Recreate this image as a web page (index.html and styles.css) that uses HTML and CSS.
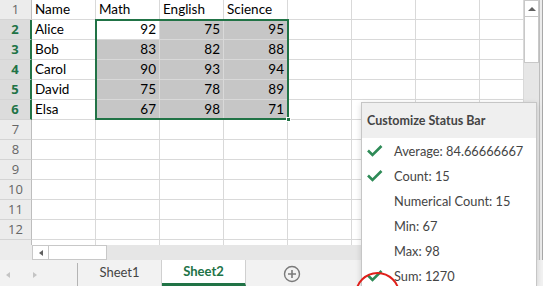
FILE: index.html
```html
<!DOCTYPE html>
<html lang="en">
<head>
    <meta charset="UTF-8">
    <title>Book1 - Excel</title>
    <link rel="stylesheet" href="styles.css">
</head>
<body>
    <div class="excel">
        <!-- Sheet area -->
        <div class="sheet-row">
            <div class="grid-area">
                <div class="grid">
                    <div class="rh">1</div><div class="c">Name</div><div class="c">Math</div><div class="c">English</div><div class="c">Science</div><div class="c"></div><div class="c"></div><div class="c"></div><div class="c"></div>
                    <div class="rh sel">2</div><div class="c">Alice</div><div class="c num active">92</div><div class="c num hl">75</div><div class="c num hl">95</div><div class="c"></div><div class="c"></div><div class="c"></div><div class="c"></div>
                    <div class="rh sel">3</div><div class="c">Bob</div><div class="c num hl">83</div><div class="c num hl">82</div><div class="c num hl">88</div><div class="c"></div><div class="c"></div><div class="c"></div><div class="c"></div>
                    <div class="rh sel">4</div><div class="c">Carol</div><div class="c num hl">90</div><div class="c num hl">93</div><div class="c num hl">94</div><div class="c"></div><div class="c"></div><div class="c"></div><div class="c"></div>
                    <div class="rh sel">5</div><div class="c">David</div><div class="c num hl">75</div><div class="c num hl">78</div><div class="c num hl">89</div><div class="c"></div><div class="c"></div><div class="c"></div><div class="c"></div>
                    <div class="rh sel">6</div><div class="c">Elsa</div><div class="c num hl">67</div><div class="c num hl">98</div><div class="c num hl">71</div><div class="c"></div><div class="c"></div><div class="c"></div><div class="c"></div>
                    <div class="rh">7</div><div class="c"></div><div class="c"></div><div class="c"></div><div class="c"></div><div class="c"></div><div class="c"></div><div class="c"></div><div class="c"></div>
                    <div class="rh">8</div><div class="c"></div><div class="c"></div><div class="c"></div><div class="c"></div><div class="c"></div><div class="c"></div><div class="c"></div><div class="c"></div>
                    <div class="rh">9</div><div class="c"></div><div class="c"></div><div class="c"></div><div class="c"></div><div class="c"></div><div class="c"></div><div class="c"></div><div class="c"></div>
                    <div class="rh">10</div><div class="c"></div><div class="c"></div><div class="c"></div><div class="c"></div><div class="c"></div><div class="c"></div><div class="c"></div><div class="c"></div>
                    <div class="rh">11</div><div class="c"></div><div class="c"></div><div class="c"></div><div class="c"></div><div class="c"></div><div class="c"></div><div class="c"></div><div class="c"></div>
                    <div class="rh">12</div><div class="c"></div><div class="c"></div><div class="c"></div><div class="c"></div><div class="c"></div><div class="c"></div><div class="c"></div><div class="c"></div>
                    <div class="rh"></div><div class="c"></div><div class="c"></div><div class="c"></div><div class="c"></div><div class="c"></div><div class="c"></div><div class="c"></div><div class="c"></div>
                </div>

                <!-- selection B2:D6 -->
                <div class="selection"><span class="handle"></span></div>

                <div class="hscroll">
                    <div class="hscroll-lead"></div>
                    <div class="sb-btn"><span class="arrow-left"></span></div>
                    <div class="hthumb"></div>
                    <div class="htrack"></div>
                </div>
            </div>

            <div class="vscroll">
                <div class="sb-btn up"><span class="arrow-up"></span></div>
                <div class="vthumb"></div>
                <div class="vtrack"></div>
            </div>
            <div class="edge"></div>
        </div>

        <!-- Sheet tabs -->
        <div class="tabs">
            <div class="tab-nav">
                <span class="nav-left"></span>
                <span class="nav-right"></span>
            </div>
            <div class="tab">Sheet1</div>
            <div class="tab current">Sheet2</div>
            <div class="add-sheet">
                <svg width="18" height="18" viewBox="0 0 18 18">
                    <circle cx="9" cy="9" r="7.5" fill="none" stroke="#7a7a7a" stroke-width="1.4"/>
                    <path d="M9 5v8M5 9h8" stroke="#7a7a7a" stroke-width="1.6"/>
                </svg>
            </div>
        </div>

        <!-- Context menu -->
        <div class="status-menu">
            <div class="menu-title">Customize Status Bar</div>
            <div class="menu-item"><span class="check"><svg width="16" height="12" viewBox="0 0 16 12"><path d="M1 5.5l4.5 4.5L14.5 1" fill="none" stroke="#2e8b57" stroke-width="2.6"/></svg></span>Average: 84.66666667</div>
            <div class="menu-item"><span class="check"><svg width="16" height="12" viewBox="0 0 16 12"><path d="M1 5.5l4.5 4.5L14.5 1" fill="none" stroke="#2e8b57" stroke-width="2.6"/></svg></span>Count: 15</div>
            <div class="menu-item"><span class="check"></span>Numerical Count: 15</div>
            <div class="menu-item"><span class="check"></span>Min: 67</div>
            <div class="menu-item"><span class="check"></span>Max: 98</div>
            <div class="menu-item"><span class="check"><svg width="16" height="12" viewBox="0 0 16 12"><path d="M1 5.5l4.5 4.5L14.5 1" fill="none" stroke="#2e8b57" stroke-width="2.6"/></svg></span>Sum: 1270</div>
        </div>

        <!-- red annotation ring -->
        <div class="ring"></div>
    </div>
</body>
</html>
```

FILE: styles.css
```css
* {
    margin: 0;
    padding: 0;
    box-sizing: border-box;
}

body {
    width: 543px;
    height: 286px;
    overflow: hidden;
    background-color: #fff;
    font-family: Lato, "Open Sans", sans-serif;
}

.excel {
    position: relative;
    width: 543px;
    height: 286px;
    overflow: hidden;
    display: flex;
    flex-direction: column;
}

/* Sheet area */
.sheet-row {
    display: flex;
    height: 260px;
}

.grid-area {
    position: relative;
    width: 524px;
    display: flex;
    flex-direction: column;
}

.grid {
    display: grid;
    grid-template-columns: 32px repeat(7, 64px) 1fr;
    grid-auto-rows: 20px;
    height: 245px;
    overflow: hidden;
}

.rh {
    background-color: #ececec;
    border-right: 1px solid #bdbdbd;
    border-bottom: 1px solid #d4d4d4;
    color: #666;
    font-family: "Open Sans", sans-serif;
    font-size: 13px;
    line-height: 19px;
    text-align: center;
}

.rh.sel {
    background-color: #dcdcdc;
    color: #217346;
    font-weight: bold;
    border-right: 2px solid #217346;
}

.c {
    border-right: 1px solid #d9d9d9;
    border-bottom: 1px solid #d9d9d9;
    font-size: 13.5px;
    line-height: 19px;
    padding: 0 3px;
    color: #000;
    white-space: nowrap;
}

.c.num {
    text-align: right;
}

.c.hl {
    background-color: #c6c6c6;
}

.selection {
    position: absolute;
    left: 95px;
    top: 19px;
    width: 194px;
    height: 101px;
    border: 2px solid #217346;
}

.handle {
    position: absolute;
    right: -4px;
    bottom: -4px;
    width: 5px;
    height: 5px;
    background-color: #217346;
    border: 1px solid #fff;
}

/* Scroll bars */
.hscroll {
    display: flex;
    height: 15px;
}

.hscroll-lead {
    width: 32px;
    background-color: #ececec;
}

.sb-btn {
    width: 17px;
    background-color: #fff;
    border: 1px solid #c8c8c8;
    display: flex;
    align-items: center;
    justify-content: center;
}

.arrow-left {
    width: 0;
    height: 0;
    border-top: 3px solid transparent;
    border-bottom: 3px solid transparent;
    border-right: 4px solid #606060;
}

.hthumb {
    width: 58px;
    background-color: #fff;
    border: 1px solid #c8c8c8;
    border-left: none;
}

.htrack {
    flex: 1;
    background-color: #e6e6e6;
}

.vscroll {
    width: 15px;
    display: flex;
    flex-direction: column;
    background-color: #e6e6e6;
}

.sb-btn.up {
    width: 15px;
    height: 17px;
}

.arrow-up {
    width: 0;
    height: 0;
    border-left: 4px solid transparent;
    border-right: 4px solid transparent;
    border-bottom: 4px solid #606060;
}

.vthumb {
    height: 46px;
    background-color: #fff;
    border: 1px solid #c8c8c8;
    border-top: none;
}

.vtrack {
    flex: 1;
}

.edge {
    flex: 1;
    background-color: #ececec;
    border-left: 1px solid #bdbdbd;
    border-right: 1px solid #a8a8a8;
}

/* Sheet tabs */
.tabs {
    display: flex;
    height: 26px;
    background-color: #f2f2f2;
}

.tab-nav {
    width: 78px;
    display: flex;
    align-items: center;
    gap: 23px;
    padding-left: 6px;
    border-right: 1px solid #b4b4b4;
    margin-top: 3px;
}

.nav-left {
    border-top: 3px solid transparent;
    border-bottom: 3px solid transparent;
    border-right: 4px solid #c4c4c4;
}

.nav-right {
    border-top: 3px solid transparent;
    border-bottom: 3px solid transparent;
    border-left: 4px solid #c4c4c4;
}

.tab {
    width: 84px;
    text-align: center;
    font-size: 13px;
    line-height: 24px;
    color: #444;
    border-right: 1px solid #d0d0d0;
}

.tab.current {
    background-color: #fff;
    color: #217346;
    font-weight: bold;
    border-bottom: 3px solid #217346;
    line-height: 22px;
}

.add-sheet {
    margin-left: 37px;
    padding-top: 5px;
}

/* Status bar context menu */
.status-menu {
    position: absolute;
    left: 361px;
    top: 102px;
    width: 176px;
    height: 184px;
    background-color: #fff;
    border: 1px solid #c6c6c6;
    border-bottom: none;
    box-shadow: 0 2px 6px rgba(0, 0, 0, 0.15);
    color: #444;
}

.menu-title {
    height: 35px;
    background-color: #efefef;
    font-weight: bold;
    font-size: 12.5px;
    line-height: 35px;
    padding-left: 5px;
}

.menu-item {
    display: flex;
    align-items: center;
    height: 25px;
    font-size: 12.8px;
}

.menu-item:first-of-type {
    margin-top: 2px;
}

.check {
    width: 32px;
    padding-left: 5px;
    display: flex;
    align-items: center;
}

.ring {
    position: absolute;
    left: 355px;
    top: 272px;
    width: 45px;
    height: 45px;
    border: 2.5px solid #e0201b;
    border-radius: 50%;
}
```
